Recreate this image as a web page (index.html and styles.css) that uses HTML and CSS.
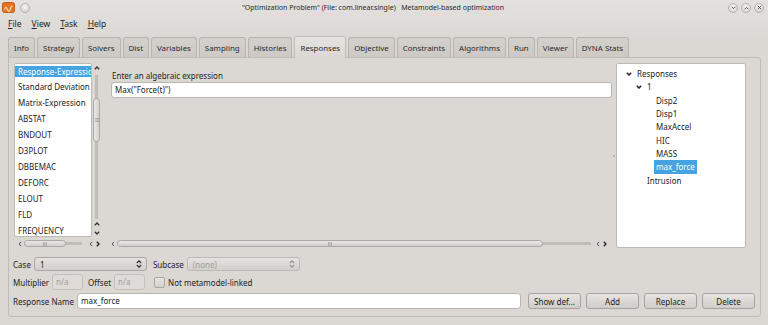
FILE: index.html
```html
<!DOCTYPE html>
<html lang="en">
<head>
<meta charset="UTF-8">
<title>Optimization Problem</title>
<link rel="stylesheet" href="styles.css">
</head>
<body>
<div class="window">
    <!-- title bar -->
    <div class="titlebar">
        <div class="tb-left">
            <svg class="app-icon" width="13" height="11" viewBox="0 0 13 11">
                <rect x="0.5" y="0.5" width="12" height="10" rx="2" fill="#e8731f" stroke="#c75a12"/>
                <path d="M2.5 7.5c1-3 2-3 3 0s2 3 3-1 2-2 2-2" fill="none" stroke="#fde3c4" stroke-width="1.2"/>
            </svg>
            <span class="tb-circle"></span>
        </div>
        <div class="tb-title">"Optimization Problem" (File: com.linear.single)&nbsp;&nbsp; Metamodel-based optimization</div>
        <div class="tb-right">
            <span class="tb-circle"><svg width="5" height="4" viewBox="0 0 5 4"><path d="M0.7 0.8l1.8 1.8 1.8-1.8" fill="none" stroke="#555" stroke-width="1"/></svg></span>
            <span class="tb-circle"><svg width="5" height="4" viewBox="0 0 5 4"><path d="M0.7 3.2l1.8-1.8 1.8 1.8" fill="none" stroke="#555" stroke-width="1"/></svg></span>
            <span class="tb-circle"><svg width="5" height="5" viewBox="0 0 5 5"><path d="M0.8 0.8l3.4 3.4M4.2 0.8l-3.4 3.4" fill="none" stroke="#555" stroke-width="1"/></svg></span>
        </div>
    </div>

    <!-- menu -->
    <div class="menubar">
        <span><u>F</u>ile</span>
        <span><u>V</u>iew</span>
        <span><u>T</u>ask</span>
        <span><u>H</u>elp</span>
    </div>

    <!-- tabs -->
    <div class="tabbar">
        <div class="tab">Info</div>
        <div class="tab">Strategy</div>
        <div class="tab">Solvers</div>
        <div class="tab">Dist</div>
        <div class="tab">Variables</div>
        <div class="tab">Sampling</div>
        <div class="tab">Histories</div>
        <div class="tab active">Responses</div>
        <div class="tab">Objective</div>
        <div class="tab">Constraints</div>
        <div class="tab">Algorithms</div>
        <div class="tab">Run</div>
        <div class="tab">Viewer</div>
        <div class="tab">DYNA Stats</div>
    </div>

    <div class="panel">
        <div class="top">
            <!-- response type list -->
            <div class="listcol">
                <div class="listrow">
                    <div class="list">
                        <div class="item first selected">Response-Expression</div>
                        <div class="item">Standard Deviation</div>
                        <div class="item">Matrix-Expression</div>
                        <div class="item">ABSTAT</div>
                        <div class="item">BNDOUT</div>
                        <div class="item">D3PLOT</div>
                        <div class="item">DBBEMAC</div>
                        <div class="item">DEFORC</div>
                        <div class="item">ELOUT</div>
                        <div class="item">FLD</div>
                        <div class="item">FREQUENCY</div>
                    </div>
                    <div class="vscroll">
                        <div class="varrow top-arrow"><svg width="6" height="4" viewBox="0 0 6 4"><path d="M0.8 3.2L3 1l2.2 2.2" fill="none" stroke="#333" stroke-width="1.3"/></svg></div>
                        <div class="vgroove">
                            <div class="vthumb"><svg width="4" height="4" viewBox="0 0 4 4"><path d="M0 0.5h4M0 2h4M0 3.5h4" stroke="#9b9793" stroke-width="0.7"/></svg></div>
                        </div>
                        <div class="varrow"><svg width="6" height="4" viewBox="0 0 6 4"><path d="M0.8 3.2L3 1l2.2 2.2" fill="none" stroke="#333" stroke-width="1.3"/></svg></div>
                        <div class="varrow"><svg width="6" height="4" viewBox="0 0 6 4"><path d="M0.8 0.8L3 3l2.2-2.2" fill="none" stroke="#333" stroke-width="1.3"/></svg></div>
                    </div>
                </div>
                <div class="hscroll small">
                    <div class="harrow"><svg width="4" height="6" viewBox="0 0 4 6"><path d="M3.2 0.8L1 3l2.2 2.2" fill="none" stroke="#555" stroke-width="1"/></svg></div>
                    <div class="hgroove"><div class="hthumb"><svg width="4" height="4" viewBox="0 0 4 4"><path d="M0.5 0v4M2 0v4M3.5 0v4" stroke="#9b9793" stroke-width="0.7"/></svg></div></div>
                    <div class="harrow"><svg width="4" height="6" viewBox="0 0 4 6"><path d="M3.2 0.8L1 3l2.2 2.2" fill="none" stroke="#555" stroke-width="1"/></svg></div>
                    <div class="harrow"><svg width="4" height="6" viewBox="0 0 4 6"><path d="M0.8 0.8L3 3 0.8 5.2" fill="none" stroke="#222" stroke-width="1.3"/></svg></div>
                </div>
            </div>

            <!-- expression editor -->
            <div class="middle">
                <div class="label">Enter an algebraic expression</div>
                <div class="input">Max("Force(t)")</div>
                <div class="spacer"></div>
                <div class="hscroll wide">
                    <div class="harrow"><svg width="4" height="6" viewBox="0 0 4 6"><path d="M3.2 0.8L1 3l2.2 2.2" fill="none" stroke="#555" stroke-width="1"/></svg></div>
                    <div class="hgroove"><div class="hthumb"><svg width="4" height="4" viewBox="0 0 4 4"><path d="M0.5 0v4M2 0v4M3.5 0v4" stroke="#9b9793" stroke-width="0.7"/></svg></div></div>
                    <div class="harrow"><svg width="4" height="6" viewBox="0 0 4 6"><path d="M3.2 0.8L1 3l2.2 2.2" fill="none" stroke="#555" stroke-width="1"/></svg></div>
                    <div class="harrow"><svg width="4" height="6" viewBox="0 0 4 6"><path d="M0.8 0.8L3 3 0.8 5.2" fill="none" stroke="#222" stroke-width="1.3"/></svg></div>
                </div>
            </div>

            <div class="splitter"><span class="dot"></span></div>

            <!-- response tree -->
            <div class="tree">
                <div class="node lvl0"><span class="exp"><svg width="6" height="4" viewBox="0 0 6 4"><path d="M0.8 0.8L3 3l2.2-2.2" fill="none" stroke="#222" stroke-width="1.5"/></svg></span>Responses</div>
                <div class="node lvl1"><span class="exp"><svg width="6" height="4" viewBox="0 0 6 4"><path d="M0.8 0.8L3 3l2.2-2.2" fill="none" stroke="#222" stroke-width="1.5"/></svg></span>1</div>
                <div class="node lvl2"><span class="txt">Disp2</span></div>
                <div class="node lvl2"><span class="txt">Disp1</span></div>
                <div class="node lvl2"><span class="txt">MaxAccel</span></div>
                <div class="node lvl2"><span class="txt">HIC</span></div>
                <div class="node lvl2"><span class="txt">MASS</span></div>
                <div class="node lvl2"><span class="txt selected">max_force</span></div>
                <div class="node lvl1b"><span class="txt">Intrusion</span></div>
            </div>
        </div>

        <div class="row case-row">
            <span class="lbl">Case</span>
            <div class="combo case">
                <span>1</span>
                <svg width="6" height="8" viewBox="0 0 6 8"><path d="M0.8 3L3 0.8 5.2 3M0.8 5L3 7.2 5.2 5" fill="none" stroke="#333" stroke-width="1.2"/></svg>
            </div>
            <span class="lbl">Subcase</span>
            <div class="combo subcase disabled">
                <span>(none)</span>
                <svg width="6" height="8" viewBox="0 0 6 8"><path d="M0.8 3L3 0.8 5.2 3M0.8 5L3 7.2 5.2 5" fill="none" stroke="#9c9895" stroke-width="1.2"/></svg>
            </div>
        </div>

        <div class="row mult-row">
            <span class="lbl">Multiplier</span>
            <div class="input small disabled">n/a</div>
            <span class="lbl">Offset</span>
            <div class="input small disabled">n/a</div>
            <span class="check"></span>
            <span class="lbl">Not metamodel-linked</span>
        </div>

        <div class="row name-row">
            <span class="lbl">Response Name</span>
            <div class="input name">max_force</div>
            <button class="btn show">Show def...</button>
            <button class="btn">Add</button>
            <button class="btn">Replace</button>
            <button class="btn">Delete</button>
        </div>
    </div>
</div>
</body>
</html>
```

FILE: styles.css
```css
body {
    margin: 0;
    padding: 0;
    font-family: "Noto Sans", "Open Sans", sans-serif;
    font-size: 8px;
    color: #232323;
    background: #dbd8d4;
    overflow: hidden;
}

.window {
    width: 768px;
    height: 325px;
    display: flex;
    flex-direction: column;
    background: linear-gradient(#e3e1de, #dbd8d4 40px);
}

/* title bar */
.titlebar {
    height: 15px;
    display: flex;
    align-items: center;
}

.tb-left {
    width: 60px;
    display: flex;
    align-items: center;
    gap: 5px;
    padding-left: 2px;
}

.tb-title {
    flex: 1;
    text-align: center;
    font-size: 7px;
    color: #2a2a2a;
    padding-right: 20px;
    white-space: nowrap;
}

.tb-right {
    width: 60px;
    display: flex;
    justify-content: flex-end;
    gap: 3px;
    padding-right: 4px;
}

.tb-circle {
    width: 10px;
    height: 10px;
    border-radius: 50%;
    box-sizing: border-box;
    border: 1px solid #b5b2ae;
    background: radial-gradient(circle at 50% 35%, #f6f5f4, #d2cfcc);
    display: flex;
    align-items: center;
    justify-content: center;
}

/* menu */
.menubar {
    height: 16px;
    display: flex;
    align-items: center;
    gap: 10px;
    padding-left: 8px;
    font-size: 8.5px;
}

.menubar u {
    text-decoration-thickness: 1px;
    text-underline-offset: 1px;
}

/* tabs */
.tabbar {
    margin-top: 5px;
    height: 21px;
    display: flex;
    align-items: flex-end;
    gap: 2px;
    padding-left: 8px;
}

.tab {
    height: 20px;
    box-sizing: border-box;
    padding: 0 5px;
    display: flex;
    align-items: center;
    border: 1px solid #b7b3af;
    border-bottom: none;
    border-radius: 3px 3px 0 0;
    background: linear-gradient(#d4d1cd, #cdc9c5);
    color: #2b2b2b;
    font-size: 7.9px;
}

.tab.active {
    height: 22px;
    margin-bottom: -1px;
    position: relative;
    z-index: 1;
    background: linear-gradient(#e5e3e0, #dbd8d4);
    border-color: #c1bdb9;
}

/* main panel */
.panel {
    margin-left: 8px;
    width: 753px;
    height: 260px;
    box-sizing: border-box;
    border: 1px solid #bfbbb7;
    border-radius: 0 3px 3px 3px;
    padding: 5px 5px 6px 5px;
    display: flex;
    flex-direction: column;
}

.top {
    height: 185px;
    display: flex;
    margin-right: 9px;
}

.listcol {
    width: 87px;
    display: flex;
    flex-direction: column;
}

.listrow {
    height: 174px;
    display: flex;
}

.list {
    width: 78px;
    box-sizing: border-box;
    border: 1px solid #bdb9b5;
    border-radius: 2px;
    background: #fff;
    padding-top: 2px;
    overflow: hidden;
}

.item {
    height: 16px;
    line-height: 16px;
    padding-left: 3px;
    white-space: nowrap;
    overflow: hidden;
}

.item.first {
    height: 11px;
    line-height: 11px;
    margin-bottom: 2px;
}

.selected {
    background: #45a3e1;
    color: #fff;
}

/* scrollbars */
.vscroll {
    width: 9px;
    display: flex;
    flex-direction: column;
}

.varrow {
    height: 8.5px;
    display: flex;
    align-items: center;
    justify-content: center;
}

.varrow.top-arrow {
    height: 10px;
}

.vgroove {
    flex: 1;
    margin: 2px 0 1px;
    background: linear-gradient(to right, transparent 3px, #c0bcb8 3px, #c0bcb8 6px, transparent 6px);
    border-radius: 2px;
}

.vthumb {
    margin: 23px 1px 0;
    height: 44px;
    box-sizing: border-box;
    border: 1px solid #aca8a4;
    border-radius: 4px;
    background: linear-gradient(to right, #ebe9e6, #d3cfcb);
    display: flex;
    align-items: center;
    justify-content: center;
}

.hscroll {
    height: 9px;
    display: flex;
    align-items: center;
}

.hscroll.small {
    margin-top: 2px;
    padding-left: 2px;
}

.harrow {
    width: 7px;
    height: 9px;
    display: flex;
    align-items: center;
    justify-content: center;
}

.hgroove {
    flex: 1;
    height: 9px;
    margin: 0 1px;
    background: linear-gradient(to bottom, transparent 3px, #c0bcb8 3px, #c0bcb8 6px, transparent 6px);
    display: flex;
    align-items: center;
}

.hthumb {
    height: 7px;
    box-sizing: border-box;
    border: 1px solid #aca8a4;
    border-radius: 4px;
    background: linear-gradient(#ebe9e6, #d3cfcb);
    display: flex;
    align-items: center;
    justify-content: center;
}

.small .hgroove {
    margin-right: 5px;
}

.small .hthumb {
    width: 42px;
}

.wide .hthumb {
    width: 426px;
}

.wide .hgroove {
    margin-right: 3px;
}

/* middle editor */
.middle {
    flex: 1;
    margin-left: 8px;
    display: flex;
    flex-direction: column;
}

.label {
    padding: 6px 0 0 3px;
    height: 13px;
    line-height: 13px;
}

.input {
    height: 16px;
    box-sizing: border-box;
    border: 1px solid #bab6b2;
    border-radius: 3px;
    background: #fff;
    padding-left: 3px;
    line-height: 14px;
    white-space: nowrap;
}

.middle .input {
    margin-left: 2px;
}

.spacer {
    flex: 1;
}

.middle .hscroll {
    margin-right: 4px;
}

.splitter {
    width: 4px;
    display: flex;
    align-items: center;
    justify-content: center;
}

.dot {
    width: 2px;
    height: 2px;
    border-radius: 1px;
    background: #a9a5a1;
}

/* tree */
.tree {
    width: 130px;
    box-sizing: border-box;
    border: 1px solid #bdb9b5;
    border-radius: 2px;
    background: #fff;
    padding-top: 3px;
}

.node {
    height: 13.3px;
    display: flex;
    align-items: center;
    white-space: nowrap;
}

.exp {
    width: 9px;
    display: flex;
    justify-content: center;
    margin-right: 4px;
}

.lvl0 {
    padding-left: 7px;
}

.lvl1 {
    padding-left: 17px;
}

.lvl1b {
    padding-left: 28px;
}

.lvl2 {
    padding-left: 37px;
}

.txt {
    padding: 0 2px;
    line-height: 13px;
}

.txt.selected {
    line-height: 14px;
}

/* form rows */
.row {
    display: flex;
    align-items: center;
    white-space: nowrap;
}

.case-row {
    margin-top: 9px;
    height: 14px;
}

.mult-row {
    margin-top: 3px;
    height: 16px;
}

.name-row {
    margin-top: 3px;
    height: 16px;
}

.lbl {
    margin-left: -1px;
    margin-right: 3px;
}

.combo {
    height: 14px;
    box-sizing: border-box;
    border: 1px solid #aaa6a2;
    border-radius: 3px;
    background: linear-gradient(#e5e2df, #d2cecb);
    display: flex;
    align-items: center;
    justify-content: space-between;
    padding: 0 4px 0 5px;
    margin-right: 7px;
}

.combo.case {
    width: 113px;
}

.combo.subcase {
    width: 113px;
    border-color: #bdb9b5;
}

.disabled {
    color: #a29f9c;
}

.input.small {
    width: 31px;
    background: #dedbd8;
    border-color: #c3bfbb;
    margin-right: 6px;
}

.check {
    width: 11px;
    height: 11px;
    box-sizing: border-box;
    border: 1px solid #aaa6a2;
    border-radius: 2px;
    background: linear-gradient(#e6e3e0, #d5d1cd);
    margin: 0 4px 0 3px;
}

.input.name {
    flex: 1;
    margin-right: 7px;
}

.btn {
    height: 16px;
    box-sizing: border-box;
    border: 1px solid #a7a3a0;
    border-radius: 3px;
    background: linear-gradient(#e7e4e1, #d0ccc8);
    font-family: inherit;
    font-size: 8px;
    color: #232323;
    padding: 0;
    width: 53px;
    margin-left: 5px;
}

.btn.show {
    margin-left: 0;
}
```
